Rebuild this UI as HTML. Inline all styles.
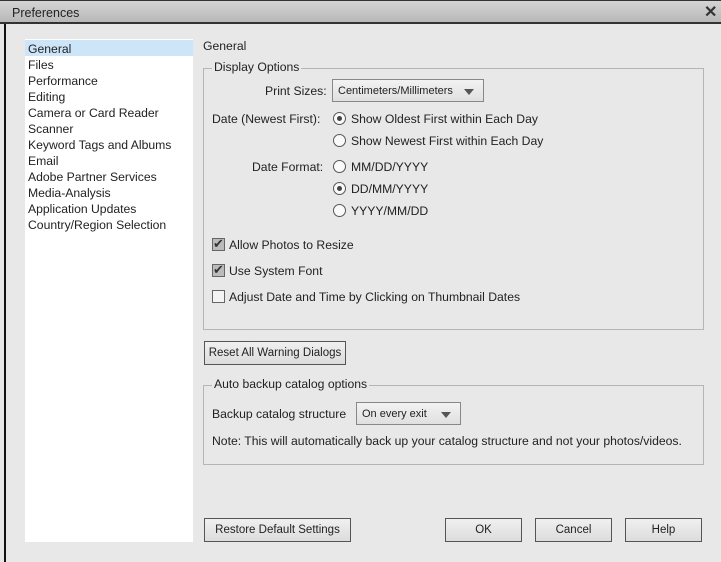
<!DOCTYPE html>
<html><head><style>
*{margin:0;padding:0;box-sizing:border-box}
body{width:721px;height:562px;background:#e8e8e8;font-family:"Liberation Sans",sans-serif;font-size:12.2px;color:#222;position:relative;overflow:hidden}
.a{position:absolute;white-space:nowrap}
.title{left:0;top:0;width:721px;height:24px;background:linear-gradient(#d4d4d4,#b8b8b8);border-top:1px solid #333;border-bottom:2px solid #333}
.lb{left:4px;top:24px;width:2px;height:538px;background:#111}
.list{left:25px;top:39px;width:168px;height:503px;background:#fff}
.btn{position:absolute;border:1px solid #555;background:linear-gradient(#f0f0f0,#dcdcdc);font-size:11.5px;text-align:center;line-height:23px;height:24px}
.grp{position:absolute;border:1px solid #b5b5b5}
.gl{position:absolute;background:#e8e8e8;padding:0 2px;top:-9px;left:8px}
.r{position:absolute;width:13px;height:13px;border:1px solid #555;border-radius:50%;background:#fafafa}
.r.on::after{content:"";position:absolute;left:3px;top:3px;width:5px;height:5px;border-radius:50%;background:#444}
.c{position:absolute;width:13px;height:13px;border:1px solid #666;background:#f4f4f4}
.c.on{background:#bbb}
.dd{position:absolute;border:1px solid #888;background:linear-gradient(#f2f2f2,#e0e0e0);font-size:11px;line-height:22px;padding-left:5px;height:23px}
.dd::after{content:"";position:absolute;right:9px;top:9px;border-left:5px solid transparent;border-right:5px solid transparent;border-top:6px solid #555}
</style></head><body>
<div class="a title"></div>
<div class="a" style="left:12px;top:6px;font-size:12.5px">Preferences</div>
<div class="a" style="left:704px;top:2px;font-size:16px;font-weight:bold;color:#333">✕</div>
<div class="a lb"></div>
<div class="a list"></div>
<div class="a" style="left:25px;top:40px;width:168px;height:16px;background:#cde5f8"></div>
<div class="a" style="left:28px;top:41px;line-height:16px">General<br>Files<br>Performance<br>Editing<br>Camera or Card Reader<br>Scanner<br>Keyword Tags and Albums<br>Email<br>Adobe Partner Services<br>Media-Analysis<br>Application Updates<br>Country/Region Selection</div>
<div class="a" style="left:203px;top:39px">General</div>
<div class="grp" style="left:203px;top:68px;width:501px;height:262px"><span class="gl">Display Options</span></div>
<div class="a" style="left:265px;top:84px">Print Sizes:</div>
<div class="dd" style="left:332px;top:79px;width:152px">Centimeters/Millimeters</div>
<div class="a" style="left:212px;top:112px">Date (Newest First):</div>
<div class="r on" style="left:333px;top:112px"></div><div class="a" style="left:351px;top:112px">Show Oldest First within Each Day</div>
<div class="r" style="left:333px;top:134px"></div><div class="a" style="left:351px;top:134px">Show Newest First within Each Day</div>
<div class="a" style="left:252px;top:160px">Date Format:</div>
<div class="r" style="left:333px;top:160px"></div><div class="a" style="left:351px;top:160px">MM/DD/YYYY</div>
<div class="r on" style="left:333px;top:182px"></div><div class="a" style="left:351px;top:182px">DD/MM/YYYY</div>
<div class="r" style="left:333px;top:204px"></div><div class="a" style="left:351px;top:204px">YYYY/MM/DD</div>
<div class="c on" style="left:212px;top:238px"><span class="a" style="left:0;top:-3px;font-size:13px;color:#333">✔</span></div><div class="a" style="left:229px;top:238px">Allow Photos to Resize</div>
<div class="c on" style="left:212px;top:264px"><span class="a" style="left:0;top:-3px;font-size:13px;color:#333">✔</span></div><div class="a" style="left:229px;top:264px">Use System Font</div>
<div class="c" style="left:212px;top:290px"></div><div class="a" style="left:229px;top:290px">Adjust Date and Time by Clicking on Thumbnail Dates</div>
<div class="btn" style="left:204px;top:341px;width:142px">Reset All Warning Dialogs</div>
<div class="grp" style="left:203px;top:385px;width:501px;height:80px"><span class="gl">Auto backup catalog options</span></div>
<div class="a" style="left:212px;top:407px">Backup catalog structure</div>
<div class="dd" style="left:356px;top:402px;width:105px">On every exit</div>
<div class="a" style="left:212px;top:434px">Note: This will automatically back up your catalog structure and not your photos/videos.</div>
<div class="btn" style="left:204px;top:518px;width:147px">Restore Default Settings</div>
<div class="btn" style="left:445px;top:518px;width:77px">OK</div>
<div class="btn" style="left:535px;top:518px;width:77px">Cancel</div>
<div class="btn" style="left:625px;top:518px;width:77px">Help</div>
</body></html>
